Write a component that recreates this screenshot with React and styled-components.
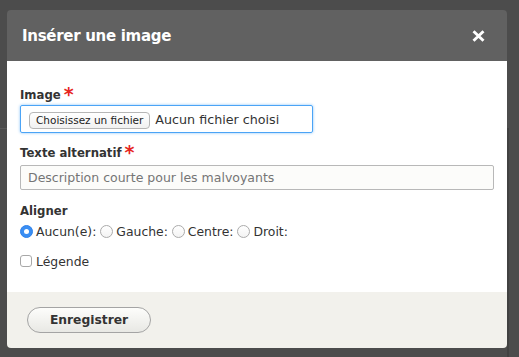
import React from 'react';
import styled, { createGlobalStyle } from 'styled-components';

const Global = createGlobalStyle`
  html, body { margin: 0; padding: 0; }
  body {
    width: 519px;
    height: 357px;
    overflow: hidden;
    background-color: #4c4c4c;
    background-image: linear-gradient(#5a5a5a, #5a5a5a), linear-gradient(#414141, #414141);
    background-size: 7px 1px, 2px 229px;
    background-position: 0 128px, 507px 128px;
    background-repeat: no-repeat;
    font-family: "DejaVu Sans", sans-serif;
  }
`;

const Dialog = styled.div`
  margin: 10px 0 0 7px;
  width: 500px;
  border-radius: 4px;
  overflow: hidden;
  display: flex;
  flex-direction: column;
`;

const Header = styled.div`
  height: 51px;
  background: #616161;
  display: flex;
  align-items: center;
  justify-content: space-between;
  padding: 0 22px 0 15px;
  box-sizing: border-box;
`;

const Title = styled.h2`
  margin: 0;
  color: #fff;
  font-size: 15px;
  font-weight: 700;
  letter-spacing: -0.3px;
`;

const Close = styled.button`
  width: 13px;
  height: 12px;
  padding: 0;
  border: 0;
  background: none;
  display: flex;
  cursor: pointer;
`;

const Body = styled.div`
  background: #fff;
  height: 231px;
  box-sizing: border-box;
  padding: 27px 13px 0;
  display: flex;
  flex-direction: column;
`;

const Label = styled.label`
  display: block;
  font-size: 11.7px;
  font-weight: 700;
  line-height: 15px;
  color: #333;
  margin-top: ${p => p.$top || 0}px;
`;

const Required = styled.span`
  color: #e6261f;
  font-size: 19px;
  font-weight: 700;
  line-height: 0;
  position: relative;
  top: 2px;
  margin-left: 3px;
`;

const FileBox = styled.div`
  margin-top: 2px;
  width: 293px;
  height: 28px;
  box-sizing: border-box;
  border: 1px solid #4ba4f6;
  border-radius: 2px;
  box-shadow: 0 0 3px #86c2f8;
  display: flex;
  align-items: center;
  gap: 5px;
  padding-left: 8px;
`;

const FileButton = styled.button`
  height: 17px;
  padding: 0 6px;
  margin-top: 2px;
  box-sizing: border-box;
  border: 1px solid #b6b6b6;
  border-radius: 4px;
  background: linear-gradient(#ffffff, #f1f1f1);
  font-family: "DejaVu Sans", sans-serif;
  font-size: 10.5px;
  color: #222;
  line-height: 15px;
`;

const FileName = styled.span`
  font-size: 12.7px;
  color: #333;
`;

const TextInput = styled.input`
  margin-top: 4px;
  height: 25px;
  width: 100%;
  box-sizing: border-box;
  border: 1px solid #b8b8b8;
  border-radius: 2px;
  background: #fcfcfa;
  padding: 0 7px;
  font-family: "DejaVu Sans", sans-serif;
  font-size: 12.5px;
  color: #333;
  outline: none;
  &::placeholder { color: #757575; }
`;

const OptionRow = styled.div`
  margin-top: ${p => p.$top}px;
  height: 16px;
  display: flex;
  align-items: center;
`;

const Option = styled.label`
  display: flex;
  align-items: center;
  font-size: 12.4px;
  color: #333;
  margin-right: 4px;
`;

const Radio = styled.input.attrs({ type: 'radio' })`
  appearance: none;
  margin: 0 3px 0 0;
  width: 13px;
  height: 13px;
  box-sizing: border-box;
  border-radius: 50%;
  border: 1px solid #ababab;
  background: linear-gradient(#ffffff, #f3f3f3);
  display: grid;
  place-items: center;
  &:checked {
    border-color: #2f82ea;
    background: #3a8ef3;
  }
  &:checked::after {
    content: '';
    width: 5px;
    height: 5px;
    border-radius: 50%;
    background: #fff;
  }
`;

const Checkbox = styled.input.attrs({ type: 'checkbox' })`
  appearance: none;
  margin: 0 4px 0 0;
  width: 12px;
  height: 12px;
  box-sizing: border-box;
  border-radius: 3px;
  border: 1px solid #a8a8a8;
  background: #fff;
`;

const Footer = styled.div`
  background: #f2f1ec;
  height: 56px;
  box-sizing: border-box;
  padding: 15px 20px;
`;

const SaveButton = styled.button`
  width: 124px;
  height: 26px;
  border-radius: 13px;
  border: 1px solid #a4a4a4;
  background: linear-gradient(#fdfdfb, #e8e8e4);
  font-family: "DejaVu Sans", sans-serif;
  font-size: 12.3px;
  font-weight: 700;
  color: #333;
  padding: 0;
`;

const aligns = ['Aucun(e):', 'Gauche:', 'Centre:', 'Droit:'];

export default function App() {
  return (
    <>
      <Global />
      <Dialog>
        <Header>
          <Title>Insérer une image</Title>
          <Close aria-label="Fermer">
            <svg width="13" height="12" viewBox="0 0 13 12">
              <path d="M1.5 1.2 L11.5 10.8 M11.5 1.2 L1.5 10.8" stroke="#fff" strokeWidth="2.9" />
            </svg>
          </Close>
        </Header>
        <Body>
          <Label>Image<Required>*</Required></Label>
          <FileBox>
            <FileButton>Choisissez un fichier</FileButton>
            <FileName>Aucun fichier choisi</FileName>
          </FileBox>
          <Label $top={13}>Texte alternatif<Required>*</Required></Label>
          <TextInput placeholder="Description courte pour les malvoyants" />
          <Label $top={14}>Aligner</Label>
          <OptionRow $top={4}>
            {aligns.map((a, i) => (
              <Option key={a}>
                <Radio name="align" defaultChecked={i === 0} />
                {a}
              </Option>
            ))}
          </OptionRow>
          <OptionRow $top={14}>
            <Option>
              <Checkbox />
              Légende
            </Option>
          </OptionRow>
        </Body>
        <Footer>
          <SaveButton>Enregistrer</SaveButton>
        </Footer>
      </Dialog>
    </>
  );
}
